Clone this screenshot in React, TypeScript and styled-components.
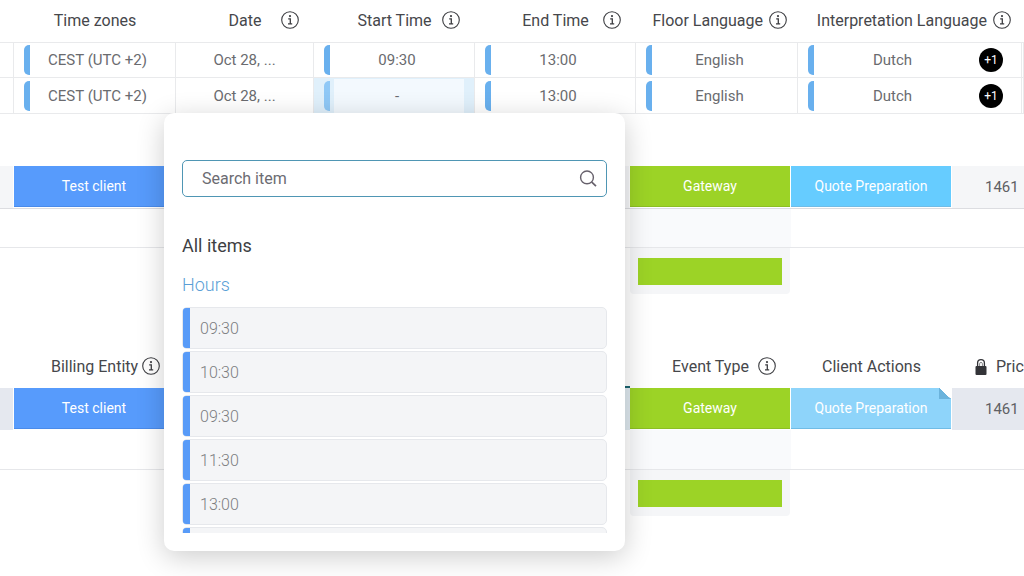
import React from "react";
import styled, { createGlobalStyle } from "styled-components";

const GlobalStyle = createGlobalStyle`
  * { box-sizing: border-box; }
  body {
    margin: 0;
    background: #fff;
    font-family: Roboto, "Liberation Sans", sans-serif;
    color: #4b4c50;
  }
  button { font: inherit; }
`;

const Page = styled.main`
  position: relative;
  min-height: 100vh;
  overflow: hidden;
`;

const Board = styled.table<{ $top?: number }>`
  width: 100%;
  table-layout: fixed;
  border-collapse: separate;
  border-spacing: 0;
  margin-top: ${(p) => p.$top ?? 0}px;
  td, th { padding: 0; white-space: nowrap; }
`;

const Col = styled.col<{ $w?: number }>`
  width: ${(p) => (p.$w ? `${p.$w}px` : "auto")};
`;

const HeadCell = styled.th<{ $line?: boolean }>`
  height: 43px;
  font-size: 16px;
  font-weight: 400;
  color: #46474b;
  overflow: hidden;
  border-bottom: ${(p) => (p.$line ? "1px solid #e9eaec" : "0")};
`;

const HeadInner = styled.div<{ $tight?: boolean }>`
  display: grid;
  grid-template-columns: ${(p) => (p.$tight ? "auto auto" : "1fr auto 1fr")};
  justify-content: ${(p) => (p.$tight ? "end" : "stretch")};
  column-gap: ${(p) => (p.$tight ? 6 : 0)}px;
  align-items: center;
  padding: 0 ${(p) => (p.$tight ? 11 : 15)}px;
`;

const HeadLabel = styled.span<{ $tight?: boolean }>`
  grid-column: ${(p) => (p.$tight ? 1 : 2)};
  line-height: 20px;
`;

const InfoButton = styled.button`
  display: flex;
  justify-self: end;
  padding: 0 0 2px;
  border: 0;
  background: none;
  color: #3c3d41;
`;

const LockedHead = styled.div`
  display: flex;
  align-items: center;
  gap: 8px;
  padding-left: 22px;
  svg { flex: none; }
`;

const Cell = styled.td<{ $active?: boolean }>`
  height: 36px;
  border-right: 1px solid #e9eaec;
  border-bottom: 1px solid #e9eaec;
  background: ${(p) => (p.$active ? "#e0f0fb" : "#fff")};
  tr:first-child > & { height: 35px; }
`;

const CellInner = styled.div`
  display: grid;
  grid-template-columns: 16px 1fr 10px;
  align-items: center;
  height: 34px;
`;

const Tab = styled.i<{ $faded?: boolean }>`
  justify-self: end;
  width: 6px;
  height: 30px;
  border-radius: 5px 0 0 5px;
  background: ${(p) => (p.$faded ? "#8fc8f6" : "#69b0ee")};
`;

const Value = styled.span<{ $active?: boolean }>`
  display: flex;
  align-items: center;
  justify-content: center;
  height: 100%;
  margin-left: ${(p) => (p.$active ? 4 : 0)}px;
  padding-right: ${(p) => (p.$active ? 4 : 0)}px;
  font-size: 15px;
  color: #6a6b6f;
  background: ${(p) => (p.$active ? "#f3f9fe" : "transparent")};
`;

const MultiValue = styled(Value)`
  display: grid;
  grid-template-columns: 1fr 24px;
  margin-right: 18px;
  grid-column: 2 / 4;
  span { text-align: center; padding-right: 8px; }
`;

const CountBadge = styled.b`
  display: flex;
  align-items: center;
  justify-content: center;
  width: 24px;
  height: 24px;
  border-radius: 50%;
  background: #000;
  color: #fff;
  font-size: 12px;
  font-weight: 400;
`;

const GroupCell = styled.td<{ $bg?: string }>`
  height: 42px;
  vertical-align: top;
  border-right: 1px solid #fff;
  background: ${(p) => p.$bg ?? "transparent"};
  &:last-child { border-right: 0; }
`;

const FocusedCell = styled(GroupCell)`
  border-right: 0;
  box-shadow: 0 -2px 0 #1b6470;
`;

const Status = styled.button<{ $bg: string; $edge?: string }>`
  display: block;
  position: relative;
  width: 100%;
  height: 41px;
  padding: 0;
  border: 0;
  border-bottom: 1px solid ${(p) => p.$edge ?? p.$bg};
  background: ${(p) => p.$bg};
  color: #fff;
  font-size: 14px;
  font-weight: 400;
`;

const NoteCorner = styled.i`
  position: absolute;
  top: 0;
  right: 0;
  width: 12px;
  height: 11px;
  background: linear-gradient(to top right, #6bb3dc 50%, #fff 51%);
`;

const Amount = styled.span`
  display: block;
  padding-left: 33px;
  font-size: 15px;
  line-height: 42px;
  color: #5f6064;
`;

const LineCell = styled.td<{ $tint?: boolean }>`
  height: 40px;
  border-bottom: 1px solid #e6e7ea;
  background: ${(p) => (p.$tint ? "#f9fafc" : "transparent")};
`;

const TopLineCell = styled(LineCell)`
  border-top: 1px solid #dcdde1;
`;

const SummaryCell = styled.td`
  height: 46px;
  border-right: 1px solid #fff;
`;

const SummaryBox = styled.div`
  height: 46px;
  padding: 10px 8px 9px;
  border-radius: 0 0 4px 4px;
  background: #f5f6f8;
`;

const SummaryBar = styled.div`
  height: 100%;
  background: #9cd326;
`;

const Popover = styled.section`
  position: absolute;
  top: 113px;
  left: 164px;
  width: 461px;
  padding: 47px 18px 18px;
  border-radius: 10px;
  background: #fff;
  box-shadow: 0 6px 28px rgba(0, 0, 0, 0.2);
`;

const SearchBox = styled.label`
  display: flex;
  align-items: center;
  height: 37px;
  padding: 0 9px 0 19px;
  border: 1px solid #4f96b4;
  border-radius: 5px;
`;

const SearchInput = styled.input`
  flex: 1;
  min-width: 0;
  padding: 0;
  border: 0;
  outline: 0;
  background: none;
  font: 16px Roboto, sans-serif;
  color: #55565b;
  &::placeholder { color: #6c6c72; opacity: 1; }
`;

const Title = styled.h2`
  margin: 37px 0 0;
  font-size: 18px;
  font-weight: 400;
  line-height: 24px;
  color: #3e3f43;
`;

const Subtitle = styled.h3`
  margin: 15px 0 0;
  font-size: 18px;
  font-weight: 300;
  line-height: 24px;
  color: #5b9fd6;
`;

const List = styled.ul`
  display: flex;
  flex-direction: column;
  gap: 2px;
  height: 226px;
  margin: 10px 0 0;
  padding: 0;
  overflow: hidden;
  list-style: none;
`;

const Option = styled.button`
  display: flex;
  align-items: center;
  gap: 10px;
  width: 100%;
  height: 42px;
  padding: 0;
  border: 1px solid #e6e8ec;
  border-radius: 5px;
  background: #f4f5f7;
  color: #7c7d81;
  font-size: 16px;
  font-weight: 300;
  text-align: left;
  &::before {
    content: "";
    width: 7px;
    height: 40px;
    border-radius: 3px 0 0 3px;
    background: #589bf8;
  }
`;

const Info = ({ name }: { name: string }) => (
  <InfoButton type="button" aria-label={`About ${name}`}>
    <svg width="18" height="18" viewBox="0 0 18 18" fill="none" stroke="currentColor">
      <circle cx="9" cy="9" r="8.3" strokeWidth="1.1" />
      <circle cx="9" cy="5.1" r="1.1" fill="currentColor" stroke="none" />
      <path d="M7.2 7.8H9.3V12.6M7 12.9H11.2" strokeWidth="1.3" />
    </svg>
  </InfoButton>
);

const Head = ({ name, info = true, tight, line }: { name: string; info?: boolean; tight?: boolean; line?: boolean }) => (
  <HeadCell scope="col" $line={line}>
    <HeadInner $tight={tight}>
      <HeadLabel $tight={tight}>{name}</HeadLabel>
      {info && <Info name={name} />}
    </HeadInner>
  </HeadCell>
);

const LinkedCell = ({ value, active }: { value: string; active?: boolean }) => (
  <Cell $active={active}>
    <CellInner>
      <Tab $faded={active} />
      <Value $active={active}>{value}</Value>
    </CellInner>
  </Cell>
);

const sessions = [
  { start: "09:30", end: "13:00" },
  { start: "-", end: "13:00", active: true },
];

const Sessions = () => (
  <Board>
    <colgroup>
      {[14, 162, 138, 161, 161, 162, 224].map((w, i) => <Col key={i} $w={w} />)}
      <Col />
    </colgroup>
    <thead>
      <tr>
        <HeadCell $line />
        <Head name="Time zones" info={false} line />
        <Head name="Date" line />
        <Head name="Start Time" line />
        <Head name="End Time" line />
        <Head name="Floor Language" tight line />
        <Head name="Interpretation Language" tight line />
        <HeadCell $line />
      </tr>
    </thead>
    <tbody>
      {sessions.map((s, i) => (
        <tr key={i}>
          <Cell />
          <LinkedCell value="CEST (UTC +2)" />
          <Cell><Value>Oct 28, ...</Value></Cell>
          <LinkedCell value={s.start} active={s.active} />
          <LinkedCell value={s.end} />
          <LinkedCell value="English" />
          <Cell>
            <CellInner>
              <Tab />
              <MultiValue><span>Dutch</span><CountBadge>+1</CountBadge></MultiValue>
            </CellInner>
          </Cell>
          <Cell />
        </tr>
      ))}
    </tbody>
  </Board>
);

const Group = ({ titled }: { titled?: boolean }) => {
  const grey = titled ? "#e5e8ef" : "#f5f6f8";
  const Line = titled ? LineCell : TopLineCell;
  return (
    <Board $top={titled ? 51 : 52}>
      <colgroup>
        {[14, 161, 455, 161, 161].map((w, i) => <Col key={i} $w={w} />)}
        <Col />
      </colgroup>
      {titled && (
        <thead>
          <tr>
            <HeadCell />
            <Head name="Billing Entity" />
            <HeadCell />
            <Head name="Event Type" />
            <Head name="Client Actions" info={false} />
            <HeadCell scope="col">
              <LockedHead>
                <svg width="14" height="18" viewBox="0 0 14 18" fill="none">
                  <path d="M3.6 8V5a3.4 3.4 0 0 1 6.8 0v3" stroke="#333438" strokeWidth="1.3" />
                  <path d="M5.6 8V5.8a1.4 1.4 0 0 1 2.8 0V8" stroke="#77787c" strokeWidth="0.9" />
                  <rect x="1.5" y="8" width="11" height="9" rx="1" fill="#333438" />
                </svg>
                Price
              </LockedHead>
            </HeadCell>
          </tr>
        </thead>
      )}
      <tbody>
        <tr>
          <GroupCell $bg={grey} />
          <GroupCell><Status type="button" $bg="#579bfc" $edge="#4a8bea">Test client</Status></GroupCell>
          {titled ? <FocusedCell $bg="#dfe9ef" /> : <GroupCell $bg={grey} />}
          <GroupCell><Status type="button" $bg="#9cd326" $edge="#8cbf24">Gateway</Status></GroupCell>
          <GroupCell>
            <Status type="button" $bg={titled ? "#8ed4fa" : "#66ccff"} $edge="#70bce6">
              Quote Preparation
              {titled && <NoteCorner />}
            </Status>
          </GroupCell>
          <GroupCell $bg={grey}><Amount>1461</Amount></GroupCell>
        </tr>
        <tr>
          <Line /><Line /><Line /><Line $tint /><Line /><Line />
        </tr>
        <tr>
          <td colSpan={3} />
          <SummaryCell><SummaryBox><SummaryBar /></SummaryBox></SummaryCell>
          <td colSpan={2} />
        </tr>
      </tbody>
    </Board>
  );
};

const hours = ["09:30", "10:30", "09:30", "11:30", "13:00", ""];

const ItemPicker = () => (
  <Popover aria-label="Choose item">
    <SearchBox>
      <SearchInput type="text" placeholder="Search item" aria-label="Search item" />
      <svg width="18" height="18" viewBox="0 0 18 18" fill="none" stroke="#66606b" strokeWidth="1.4">
        <circle cx="8" cy="7.4" r="6.4" />
        <path d="M12.8 12.2L17 16.2" strokeWidth="1.7" />
      </svg>
    </SearchBox>
    <Title>All items</Title>
    <Subtitle>Hours</Subtitle>
    <List>
      {hours.map((h, i) => <li key={i}><Option type="button">{h}</Option></li>)}
    </List>
  </Popover>
);

export default function App() {
  return (
    <>
      <GlobalStyle />
      <Page>
        <Sessions />
        <Group />
        <Group titled />
        <ItemPicker />
      </Page>
    </>
  );
}
